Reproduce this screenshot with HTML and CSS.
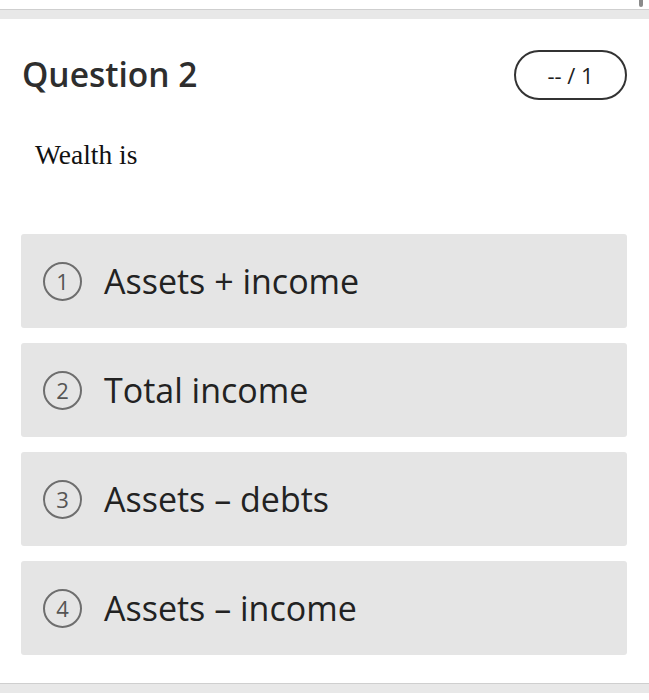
FILE: index.html
```html
<!DOCTYPE html>
<html lang="en">
<head>
<meta charset="utf-8">
<title>Question 2</title>
<link rel="stylesheet" href="styles.css">
</head>
<body>
<div class="top-strip"><span class="scroll-thumb"></span></div>
<div class="band"></div>
<main class="question">
  <header class="q-head">
    <h2 class="q-title">Question 2</h2>
    <span class="q-score">-- / 1</span>
  </header>
  <p class="q-text">Wealth is</p>
  <ol class="options">
    <li class="option"><span class="num">1</span><span class="label">Assets + income</span></li>
    <li class="option"><span class="num">2</span><span class="label">Total income</span></li>
    <li class="option"><span class="num">3</span><span class="label">Assets – debts</span></li>
    <li class="option"><span class="num">4</span><span class="label">Assets – income</span></li>
  </ol>
</main>
<div class="band band-bottom"></div>
</body>
</html>
```
FILE: styles.css
```css
html, body {
  margin: 0;
  padding: 0;
  background: #fff;
}
body {
  font-family: "Open Sans", "Noto Sans", sans-serif;
  color: #222;
}
.top-strip {
  position: relative;
  height: 9px;
  background: #fff;
}
.scroll-thumb {
  position: absolute;
  right: 6px;
  top: 0;
  width: 4px;
  height: 7px;
  border-radius: 0 0 2px 2px;
  background: #8a8a8a;
}
.band {
  height: 9px;
  border-top: 1px solid #cfcfcf;
  background: #e8e8e8;
}
.question {
  padding: 31px 22px 28px 21px;
}
.q-head {
  display: flex;
  align-items: center;
  justify-content: space-between;
  height: 50px;
}
.q-title {
  margin: 0 0 0 1px;
  font-size: 33.5px;
  font-weight: 600;
  color: #2e2e2e;
  line-height: 1;
}
.q-score {
  box-sizing: border-box;
  width: 113px;
  height: 50px;
  border: 2px solid #333;
  border-radius: 25px;
  display: flex;
  align-items: center;
  justify-content: center;
  font-size: 22px;
  color: #1e1e1e;
}
.q-text {
  margin: 40px 0 0 14px;
  font-family: "Liberation Serif", "Times New Roman", serif;
  font-size: 27.5px;
  line-height: 30px;
  color: #111;
}
.options {
  list-style: none;
  margin: 64px 0 0;
  padding: 0;
  display: flex;
  flex-direction: column;
  gap: 15px;
}
.option {
  display: flex;
  align-items: center;
  height: 94px;
  background: #e5e5e5;
  border-radius: 3px;
  padding-left: 22px;
}
.num {
  box-sizing: border-box;
  width: 39px;
  height: 39px;
  border: 2px solid #6e6e6e;
  border-radius: 50%;
  display: flex;
  align-items: center;
  justify-content: center;
  font-size: 22px;
  color: #555;
  flex: none;
}
.label {
  margin-left: 22px;
  font-size: 34px;
  color: #222;
}
.band-bottom {
  height: 9px;
}
```
